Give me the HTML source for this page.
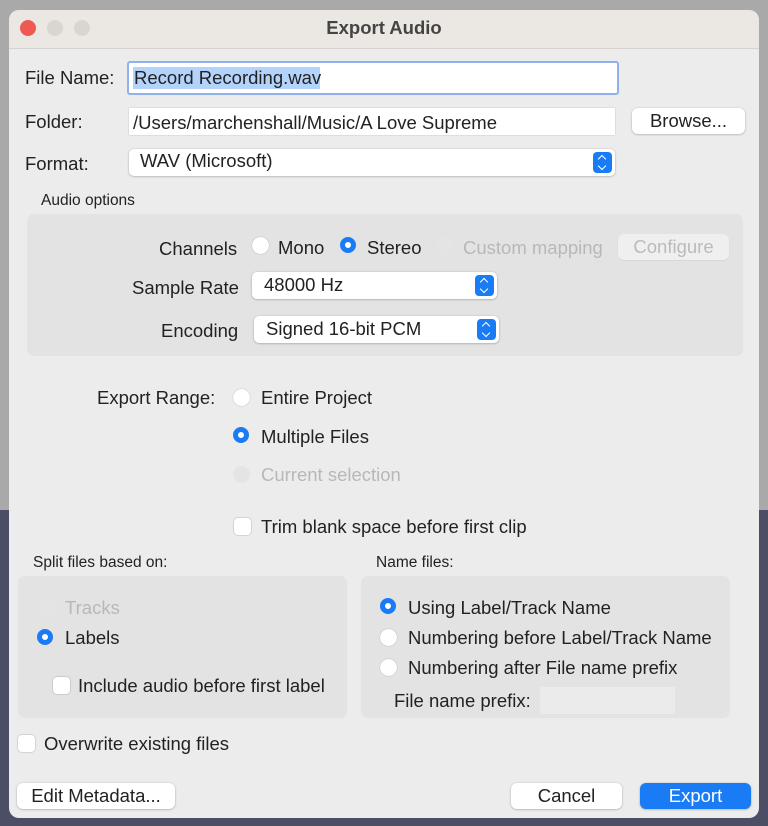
<!DOCTYPE html><html><head><style>
body{margin:0;width:768px;height:826px;overflow:hidden;position:relative;font-family:"Liberation Sans",sans-serif;background:#a9a9a9}
.a{position:absolute}
.t{position:absolute;font-size:18.5px;color:#222;white-space:nowrap;line-height:20px}
.g{color:#b8b8b8}
.s{font-size:15.5px}
.field{position:absolute;background:#fff;box-shadow:0 0 1px rgba(0,0,0,.3)}
.btn{position:absolute;background:#fff;border-radius:6px;box-shadow:0 0.5px 2px rgba(0,0,0,.3);font-size:18.5px;text-align:center;color:#222}
.pop{position:absolute;background:#fff;border-radius:5px;box-shadow:0 0.5px 2px rgba(0,0,0,.3)}
.arr{position:absolute;right:3px;top:3px;width:19px;bottom:3px;background:#1a7cf5;border-radius:4px}
.arr:before{content:"";position:absolute;left:6px;top:4px;width:5px;height:5px;border-left:1.5px solid #fff;border-top:1.5px solid #fff;transform:rotate(45deg)}
.arr:after{content:"";position:absolute;left:6px;bottom:4px;width:5px;height:5px;border-right:1.5px solid #fff;border-bottom:1.5px solid #fff;transform:rotate(45deg)}
.r{position:absolute;width:17px;height:17px;border-radius:50%;background:#fff;box-shadow:0 0 1px rgba(0,0,0,.4)}
.r.on{background:#fff;border:5.5px solid #1a7cf5;width:6px;height:6px;box-shadow:none}
.r.dis{background:#e4e4e4;box-shadow:none}
.c{position:absolute;width:17px;height:17px;border-radius:4px;background:#fff;box-shadow:0 0 1.5px rgba(0,0,0,.4)}
.box{position:absolute;background:#e3e3e3;border-radius:7px}
</style></head><body>
<div class="a" style="left:0;top:510px;width:768px;height:316px;background:#4b4e64"></div>
<div class="a" style="left:9px;top:10px;width:750px;height:808px;background:#ececec;border-radius:10px;overflow:hidden">
<div class="a" style="left:0;top:0;width:750px;height:38px;background:#ebe7e2;border-bottom:1px solid #d6d3cf"></div>
</div>
<div class="a" style="left:20px;top:20px;width:16px;height:16px;border-radius:50%;background:#ee5a52"></div>
<div class="a" style="left:47px;top:20px;width:16px;height:16px;border-radius:50%;background:#d9d5d0"></div>
<div class="a" style="left:74px;top:20px;width:16px;height:16px;border-radius:50%;background:#d9d5d0"></div>
<div class="t" style="left:0;width:768px;text-align:center;top:18px;font-weight:bold;color:#444">Export Audio</div>

<div class="t" style="left:25px;top:68px">File Name:</div>
<div class="field" style="left:127px;top:61px;width:488px;height:30px;border:2px solid #8fb2ee;border-radius:3px;box-shadow:none"></div>
<div class="a" style="left:133px;top:67px;width:187px;height:22px;background:#b3d3fb"></div>
<div class="t" style="left:134px;top:68px">Record Recording.wav</div>

<div class="t" style="left:25px;top:112px">Folder:</div>
<div class="field" style="left:129px;top:108px;width:486px;height:27px"></div>
<div class="t" style="left:133px;top:113px">/Users/marchenshall/Music/A Love Supreme</div>
<div class="btn" style="left:632px;top:108px;width:113px;height:26px;line-height:26px">Browse...</div>

<div class="t" style="left:25px;top:154px">Format:</div>
<div class="pop" style="left:129px;top:149px;width:486px;height:27px"><div class="arr"></div></div>
<div class="t" style="left:140px;top:151px">WAV (Microsoft)</div>

<div class="t s" style="left:41px;top:191px">Audio options</div>
<div class="box" style="left:27px;top:214px;width:716px;height:142px"></div>
<div class="t" style="left:159px;top:239px">Channels</div>
<div class="r" style="left:252px;top:237px"></div><div class="t" style="left:278px;top:238px">Mono</div>
<div class="r on" style="left:340px;top:237px"></div><div class="t" style="left:367px;top:238px">Stereo</div>
<div class="r dis" style="left:436px;top:237px"></div><div class="t g" style="left:463px;top:238px">Custom mapping</div>
<div class="btn" style="left:618px;top:234px;width:111px;height:26px;line-height:26px;color:#bbb;background:#efefef;box-shadow:0 0.5px 1px rgba(0,0,0,.1)">Configure</div>
<div class="t" style="left:132px;top:278px">Sample Rate</div>
<div class="pop" style="left:252px;top:272px;width:245px;height:27px"><div class="arr"></div></div>
<div class="t" style="left:264px;top:275px">48000 Hz</div>
<div class="t" style="left:161px;top:321px">Encoding</div>
<div class="pop" style="left:254px;top:316px;width:245px;height:27px"><div class="arr"></div></div>
<div class="t" style="left:266px;top:319px">Signed 16-bit PCM</div>

<div class="t" style="left:97px;top:388px">Export Range:</div>
<div class="r" style="left:233px;top:389px"></div><div class="t" style="left:261px;top:388px">Entire Project</div>
<div class="r on" style="left:233px;top:427px"></div><div class="t" style="left:261px;top:427px">Multiple Files</div>
<div class="r dis" style="left:233px;top:466px"></div><div class="t g" style="left:261px;top:465px">Current selection</div>
<div class="c" style="left:234px;top:518px"></div><div class="t" style="left:261px;top:517px">Trim blank space before first clip</div>

<div class="t s" style="left:33px;top:553px">Split files based on:</div>
<div class="box" style="left:18px;top:576px;width:329px;height:142px"></div>
<div class="r dis" style="left:38px;top:600px"></div><div class="t g" style="left:65px;top:598px">Tracks</div>
<div class="r on" style="left:37px;top:629px"></div><div class="t" style="left:65px;top:628px">Labels</div>
<div class="c" style="left:53px;top:677px"></div><div class="t" style="left:78px;top:676px">Include audio before first label</div>

<div class="t s" style="left:376px;top:553px">Name files:</div>
<div class="box" style="left:361px;top:576px;width:369px;height:142px"></div>
<div class="r on" style="left:380px;top:598px"></div><div class="t" style="left:408px;top:598px">Using Label/Track Name</div>
<div class="r" style="left:380px;top:629px"></div><div class="t" style="left:408px;top:628px">Numbering before Label/Track Name</div>
<div class="r" style="left:380px;top:659px"></div><div class="t" style="left:408px;top:658px">Numbering after File name prefix</div>
<div class="t" style="left:394px;top:691px">File name prefix:</div>
<div class="a" style="left:540px;top:687px;width:135px;height:27px;background:#ebebeb"></div>

<div class="c" style="left:18px;top:735px"></div><div class="t" style="left:44px;top:734px">Overwrite existing files</div>

<div class="btn" style="left:17px;top:783px;width:158px;height:26px;line-height:26px">Edit Metadata...</div>
<div class="btn" style="left:511px;top:783px;width:111px;height:26px;line-height:26px">Cancel</div>
<div class="btn" style="left:640px;top:783px;width:111px;height:26px;line-height:26px;background:#1a7cf5;color:#fff">Export</div>
</body></html>
